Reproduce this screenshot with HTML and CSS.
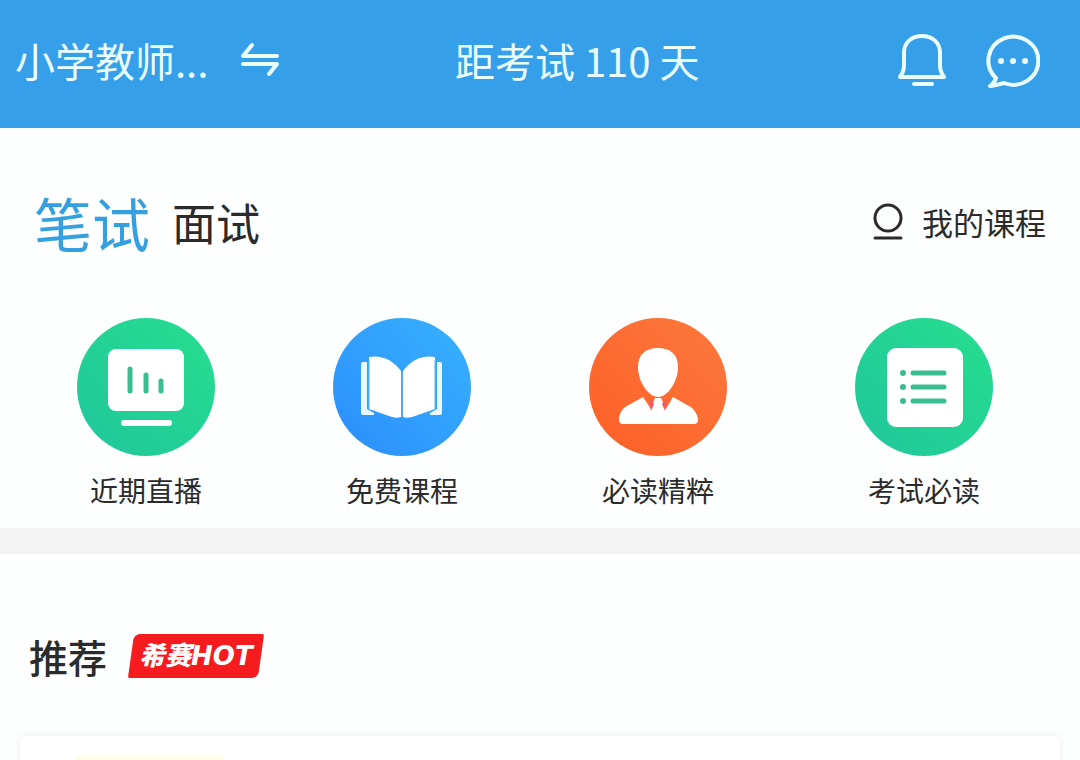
FILE: index.html
```html
<!DOCTYPE html>
<html lang="zh-CN">
<head>
  <meta charset="UTF-8">
  <meta name="viewport" content="width=device-width, initial-scale=1.0">
  <title>小学教师</title>
  <link rel="stylesheet" href="styles.css">
</head>
<body>

  <header class="topbar">
    <button type="button" class="exam-switch">
      <span>小学教师...</span>
      <svg width="40" height="36" viewBox="0 0 40 36" fill="none" stroke="currentColor" stroke-width="4" stroke-linecap="round" stroke-linejoin="round">
        <path d="M12 3 3 14H37M3 22H37L29 32"/>
      </svg>
    </button>
    <h1 class="countdown">距考试 110 天</h1>
    <div class="topbar-actions">
      <button type="button" aria-label="通知">
        <svg width="48" height="56" viewBox="0 0 48 56" fill="none" stroke="currentColor" stroke-width="4" stroke-linejoin="round">
          <path d="M2 45C5 41 6 38 6 33V21C6 10 14 4 24 4S42 10 42 21V33C42 38 43 41 46 45Z"/>
          <path d="M16 52H34" stroke-linecap="round"/>
        </svg>
      </button>
      <button type="button" aria-label="消息">
        <svg width="54" height="56" viewBox="0 0 54 56" fill="none" stroke="currentColor" stroke-width="4" stroke-linejoin="round">
          <path d="M10 46A25 24 0 1 1 18 51C14 52 9 54 4 54C8 52 9 49 10 46Z"/>
          <g fill="currentColor" stroke="none">
            <circle cx="15" cy="29" r="3"/>
            <circle cx="27" cy="29" r="3"/>
            <circle cx="39" cy="29" r="3"/>
          </g>
        </svg>
      </button>
    </div>
  </header>

  <main class="content">
    <section class="panel">
      <div class="panel-head">
        <nav class="tabs">
          <a href="#written" class="tab active">笔试</a>
          <a href="#interview" class="tab">面试</a>
        </nav>
        <a href="#courses" class="my-courses">
          <svg width="32" height="38" viewBox="0 0 32 38" fill="none" stroke="currentColor" stroke-width="3" stroke-linecap="round">
            <circle cx="16" cy="15" r="13"/>
            <path d="M3 35H29"/>
          </svg>
          <span>我的课程</span>
        </a>
      </div>

      <nav class="shortcuts">
        <a href="#live" class="shortcut">
          <svg class="shortcut-icon" viewBox="0 0 138 138">
            <defs>
              <linearGradient id="green" x1="0" y1="1" x2="1" y2="0">
                <stop offset="0" stop-color="#20c69a"/>
                <stop offset="1" stop-color="#26de90"/>
              </linearGradient>
            </defs>
            <circle cx="69" cy="69" r="69" fill="url(#green)"/>
            <rect x="31" y="31" width="76" height="62" rx="8" fill="#fff"/>
            <path d="M53 51V73M69 57V73M84 63V73" stroke="#3bbd92" stroke-width="5" stroke-linecap="round"/>
            <path d="M47 105H92" stroke="#fff" stroke-width="6" stroke-linecap="round"/>
          </svg>
          <span>近期直播</span>
        </a>
        <a href="#free" class="shortcut">
          <svg class="shortcut-icon" viewBox="0 0 138 138">
            <defs>
              <linearGradient id="blue" x1="0" y1="1" x2="1" y2="0">
                <stop offset="0" stop-color="#2b8dfb"/>
                <stop offset="1" stop-color="#38b2fe"/>
              </linearGradient>
            </defs>
            <circle cx="69" cy="69" r="69" fill="url(#blue)"/>
            <path d="M34 44H30Q28 44 28 46V95Q28 97 30 97H41V95L34 91ZM104 44H107Q109 44 109 46V95Q109 97 107 97H97V95L104 91Z" fill="#e9f9ff"/>
            <path d="M36 39Q55 36 68 53V99Q63 101 56 98L36 91ZM102 39Q83 36 70 53V99Q75 101 82 98L102 91Z" fill="#fff"/>
            <path d="M36 42V91M102 42V91M69 54V99" stroke="#5bb8e8" stroke-width="1"/>
          </svg>
          <span>免费课程</span>
        </a>
        <a href="#essence" class="shortcut">
          <svg class="shortcut-icon" viewBox="0 0 138 138">
            <defs>
              <linearGradient id="orange" x1="0" y1="1" x2="1" y2="0">
                <stop offset="0" stop-color="#fd5f27"/>
                <stop offset="1" stop-color="#fc793c"/>
              </linearGradient>
            </defs>
            <circle cx="69" cy="69" r="69" fill="url(#orange)"/>
            <path d="M49 49C49 36 57 30 69 30S89 36 89 49C89 63 79 79 69 79S49 63 49 49Z" fill="#fff"/>
            <path d="M54 79 38 88C31 92 30 98 30 103Q31 106 34 106H105Q108 106 109 103C109 98 107 92 100 88L84 79 77 91 72 80H66L62 91Z" fill="#fff"/>
            <path d="M60 80 65 86 62 93ZM78 80 73 86 76 93Z" fill="#ef5964"/>
          </svg>
          <span>必读精粹</span>
        </a>
        <a href="#exam" class="shortcut">
          <svg class="shortcut-icon" viewBox="0 0 138 138">
            <circle cx="69" cy="69" r="69" fill="url(#green)"/>
            <rect x="32" y="30" width="76" height="79" rx="9" fill="#fff"/>
            <g fill="#3bbd92">
              <circle cx="48" cy="55" r="3"/>
              <circle cx="48" cy="69" r="3"/>
              <circle cx="48" cy="83" r="3"/>
            </g>
            <path d="M58 55H89M58 69H89M58 83H89" stroke="#3bbd92" stroke-width="5" stroke-linecap="round"/>
          </svg>
          <span>考试必读</span>
        </a>
      </nav>
    </section>

    <section class="recommend">
      <div class="recommend-head">
        <h2>推荐</h2>
        <span class="hot-badge">希赛HOT</span>
      </div>
      <article class="card">
        <div class="card-strip"></div>
      </article>
    </section>
  </main>

</body>
</html>
```

FILE: styles.css
```css
* {
  box-sizing: border-box;
}

body {
  margin: 0;
  min-height: 100vh;
  display: flex;
  flex-direction: column;
  font-family: "Noto Sans CJK SC", sans-serif;
  color: #2b2b2b;
  background-color: #fdfefe;
}

a {
  color: inherit;
  text-decoration: none;
}

button {
  padding: 0;
  border: none;
  background: none;
  color: inherit;
  font: inherit;
  cursor: pointer;
}

svg {
  display: block;
}

h1,
h2 {
  margin: 0;
  font-weight: 400;
}

/* top bar */
.topbar {
  display: flex;
  justify-content: space-between;
  align-items: center;
  height: 128px;
  padding: 0 40px 8px 15px;
  background-color: #369fea;
  color: #eaffff;
  font-size: 40px;
  line-height: 48px;
}

.exam-switch {
  display: flex;
  align-items: center;
  gap: 32px;
}

.countdown {
  margin-right: 24px;
  font-size: 40px;
}

.topbar-actions {
  display: flex;
  gap: 40px;
}

/* tabs and shortcuts */
.content {
  flex: 1;
  display: flex;
  flex-direction: column;
}

.panel {
  padding-bottom: 20px;
  border-bottom: 26px solid #f3f3f3;
}

.panel-head {
  display: flex;
  justify-content: space-between;
  align-items: center;
  padding: 58px 34px 60px 34px;
}

.tabs {
  display: flex;
  align-items: center;
  gap: 22px;
}

.tab {
  font-size: 44px;
  line-height: 72px;
}

.tab.active {
  font-size: 58px;
  color: #369fdf;
}

.my-courses {
  display: flex;
  align-items: center;
  gap: 18px;
  font-size: 31px;
  line-height: 40px;
}

.shortcuts {
  display: grid;
  grid-template-columns: 64fr 64fr 64fr 69fr;
  padding: 0 18px;
}

.shortcut {
  display: flex;
  flex-direction: column;
  align-items: center;
  gap: 16px;
  font-size: 28px;
  line-height: 36px;
}

.shortcut-icon {
  width: 138px;
  height: 138px;
}

/* recommend */
.recommend {
  flex: 1;
  display: flex;
  flex-direction: column;
  padding: 74px 20px 0;
}

.recommend-head {
  display: flex;
  align-items: center;
  gap: 24px;
  padding: 0 9px;
  margin-bottom: 52px;
}

.recommend-head h2 {
  font-size: 39px;
  line-height: 56px;
  font-weight: 500;
}

.hot-badge {
  position: relative;
  z-index: 0;
  padding: 0 8px;
  color: #fff;
  font-family: "DejaVu Sans", "Noto Sans CJK SC", sans-serif;
  font-size: 26px;
  font-weight: 900;
  font-style: italic;
  line-height: 44px;
}

.hot-badge::before {
  content: "";
  position: absolute;
  inset: 0;
  z-index: -1;
  border-radius: 6px 2px;
  background-color: #f51b1e;
  transform: skewX(-8deg);
}

.card {
  flex: 1;
  padding: 20px 56px 0;
  border-radius: 8px 8px 0 0;
  background-color: #fff;
  box-shadow: 0 0 8px rgba(0, 0, 0, 0.08);
}

.card-strip {
  width: 148px;
  height: 4px;
  background-color: #fffdea;
}
```
